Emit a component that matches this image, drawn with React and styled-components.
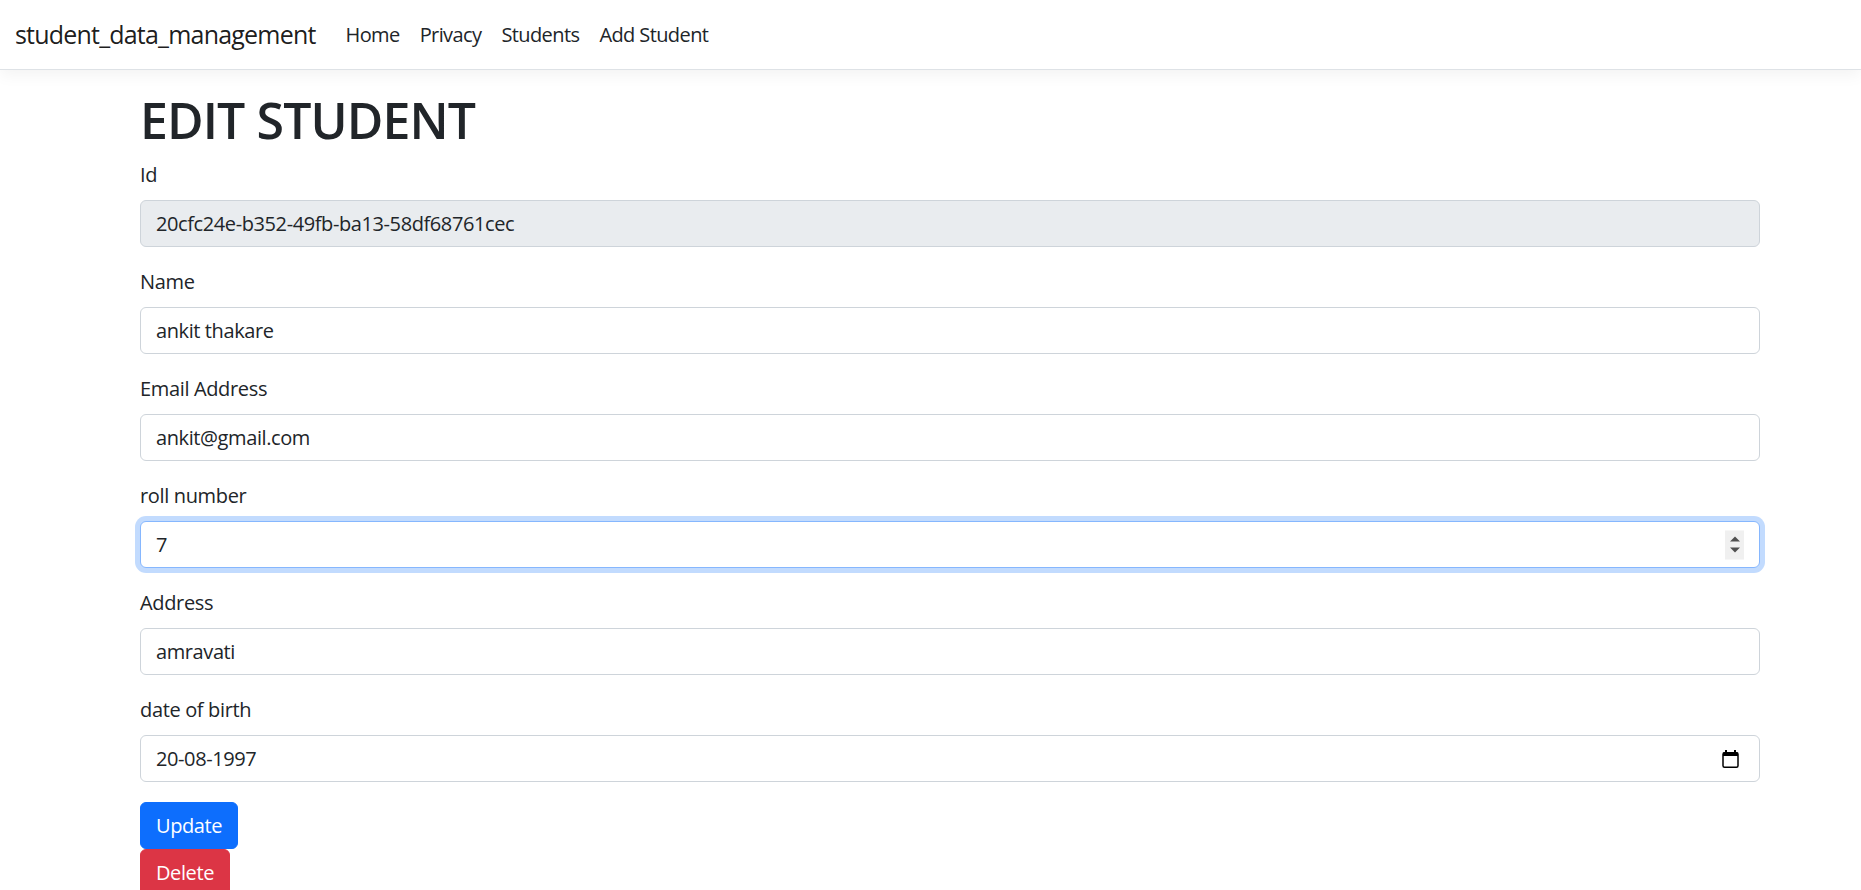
import React from "react";
import styled, { createGlobalStyle, css } from "styled-components";

const GlobalStyle = createGlobalStyle`
  html, body { margin: 0; padding: 0; background: #fff; }
  body {
    font-family: "Open Sans", "Noto Sans", "Liberation Sans", sans-serif;
    color: #212529;
    font-size: 20px;
    line-height: 1.5;
  }
  * { box-sizing: border-box; }
`;

const Navbar = styled.header`
  height: 70px;
  display: flex;
  align-items: center;
  padding: 0 15px;
  border-bottom: 1px solid #dee2e6;
  box-shadow: 0 5px 15px rgba(0, 0, 0, 0.05);
  margin-bottom: 20px;
  background: #fff;
`;

const Brand = styled.a`
  font-size: 25px;
  line-height: 37px;
  color: rgba(0, 0, 0, 0.9);
  text-decoration: none;
  margin-right: 20px;
  letter-spacing: -0.8px;
`;

const NavList = styled.nav`
  display: flex;
  align-items: center;
`;

const NavLink = styled.a`
  padding: 10px;
  font-size: 20px;
  line-height: 30px;
  color: #212529;
  text-decoration: none;
  letter-spacing: -0.6px;
`;

const Main = styled.main`
  width: 1620px;
  margin-left: 140px;
`;

const Title = styled.h1`
  margin: 0 0 10px;
  font-size: 50px;
  font-weight: 600;
  line-height: 60px;
  letter-spacing: -0.9px;
`;

const Field = styled.div`
  margin-bottom: 20px;
`;

const Label = styled.label`
  display: block;
  margin-bottom: 10px;
  font-size: 20px;
  line-height: 30px;
  letter-spacing: -0.35px;
`;

const InputWrap = styled.div`
  position: relative;
`;

const Input = styled.input`
  display: block;
  width: 100%;
  padding: 7.5px 15px;
  font-family: inherit;
  font-size: 20px;
  line-height: 30px;
  letter-spacing: -0.4px;
  color: #212529;
  background: ${(p) => (p.disabled ? "#e9ecef" : "#fff")};
  border: 1px solid #ced4da;
  border-radius: 6px;
  outline: none;
  ${(p) =>
    p.$focused &&
    css`
      border-color: #86b7fe;
      box-shadow: 0 0 0 5px rgba(13, 110, 253, 0.25);
    `}
`;

const Spinner = styled.div`
  position: absolute;
  right: 16px;
  top: 50%;
  transform: translateY(-50%);
  width: 19px;
  height: 29px;
  background: #f0f0f0;
  display: flex;
  flex-direction: column;
  align-items: center;
  justify-content: center;
  gap: 6px;
`;

const Arrow = styled.span`
  width: 0;
  height: 0;
  border-left: 5px solid transparent;
  border-right: 5px solid transparent;
  ${(p) =>
    p.$up
      ? css`border-bottom: 5px solid #505050;`
      : css`border-top: 5px solid #505050;`}
`;

const CalendarIcon = styled.svg`
  position: absolute;
  right: 21px;
  top: 50%;
  transform: translateY(-50%);
  width: 17px;
  height: 18px;
`;

const Button = styled.button`
  display: block;
  padding: 7.5px 15px;
  font-family: inherit;
  font-size: 20px;
  line-height: 30px;
  letter-spacing: -0.4px;
  color: #fff;
  border: 1px solid ${(p) => (p.$variant === "danger" ? "#dc3545" : "#0d6efd")};
  background: ${(p) => (p.$variant === "danger" ? "#dc3545" : "#0d6efd")};
  border-radius: 6px;
  cursor: pointer;
`;

const fields = [
  { label: "Id", value: "20cfc24e-b352-49fb-ba13-58df68761cec", disabled: true },
  { label: "Name", value: "ankit thakare" },
  { label: "Email Address", value: "ankit@gmail.com" },
  { label: "roll number", value: "7", focused: true, spinner: true },
  { label: "Address", value: "amravati" },
  { label: "date of birth", value: "20-08-1997", calendar: true },
];

export default function App() {
  return (
    <>
      <GlobalStyle />
      <Navbar>
        <Brand href="#">student_data_management</Brand>
        <NavList>
          <NavLink href="#">Home</NavLink>
          <NavLink href="#">Privacy</NavLink>
          <NavLink href="#">Students</NavLink>
          <NavLink href="#">Add Student</NavLink>
        </NavList>
      </Navbar>
      <Main>
        <Title>EDIT STUDENT</Title>
        {fields.map((f) => (
          <Field key={f.label}>
            <Label>{f.label}</Label>
            <InputWrap>
              <Input
                type="text"
                defaultValue={f.value}
                disabled={f.disabled}
                $focused={f.focused}
              />
              {f.spinner && (
                <Spinner>
                  <Arrow $up />
                  <Arrow />
                </Spinner>
              )}
              {f.calendar && (
                <CalendarIcon viewBox="0 0 17 18">
                  <rect x="3" y="0" width="2" height="3" fill="#000" />
                  <rect x="12" y="0" width="2" height="3" fill="#000" />
                  <rect x="1" y="2.75" width="15" height="14.5" rx="1.5" fill="none" stroke="#000" strokeWidth="1.5" />
                  <rect x="1" y="2.5" width="15" height="3.5" fill="#000" />
                </CalendarIcon>
              )}
            </InputWrap>
          </Field>
        ))}
        <Button $variant="primary">Update</Button>
        <Button $variant="danger">Delete</Button>
      </Main>
    </>
  );
}
